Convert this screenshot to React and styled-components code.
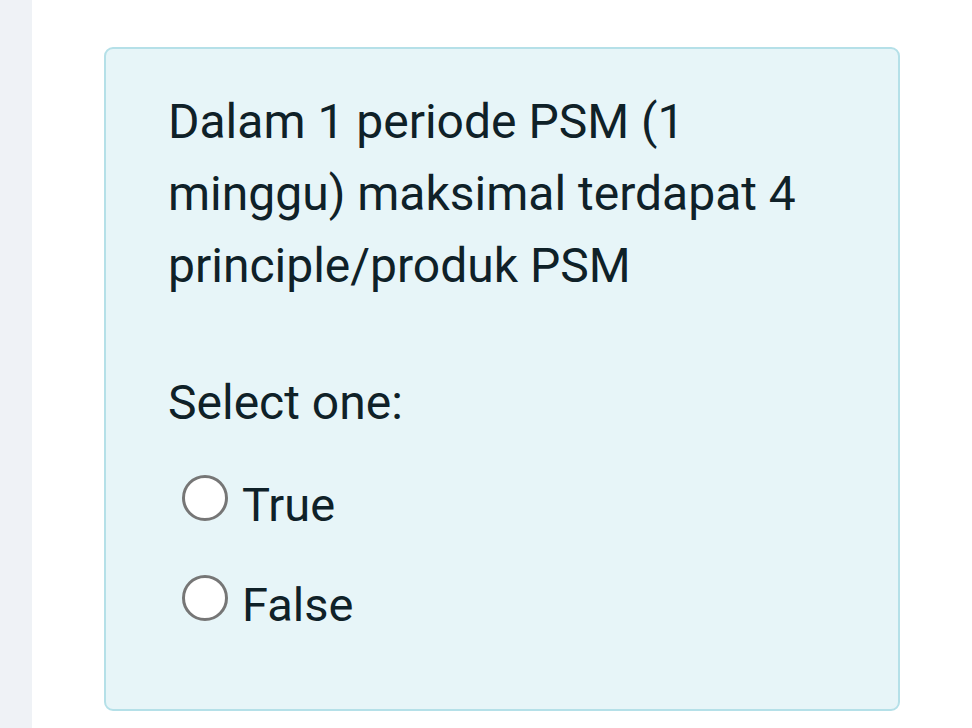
import React from "react";
import styled, { createGlobalStyle } from "styled-components";

const Global = createGlobalStyle`
  html, body { margin: 0; padding: 0; background: #ffffff; }
  body { font-family: Roboto, "Noto Sans", "Liberation Sans", sans-serif; }
  * { box-sizing: border-box; }
`;

const Page = styled.div`
  display: flex;
  min-height: 728px;
  background: #ffffff;
`;

const Sidebar = styled.aside`
  width: 32px;
  flex: 0 0 32px;
  background: #eff2f6;
`;

const Main = styled.main`
  flex: 1;
  padding: 47px 0 0 72px;
`;

const Card = styled.section`
  width: 796px;
  background: #e7f5f8;
  border: 2px solid #b5e0e8;
  border-radius: 9px;
  padding: 37px 60px 68px 62px;
  color: #0f2128;
`;

const Question = styled.p`
  margin: 0;
  font-size: 48px;
  line-height: 72px;
`;

const Prompt = styled.p`
  margin: 65px 0 0;
  font-size: 48px;
  line-height: 72px;
`;

const Options = styled.div`
  display: flex;
  flex-direction: column;
  gap: 28px;
  margin-top: 30px;
`;

const Option = styled.label`
  display: flex;
  align-items: center;
  height: 72px;
  font-size: 47px;
  line-height: 72px;
  cursor: pointer;
`;

const Radio = styled.span`
  width: 46px;
  height: 46px;
  flex: 0 0 46px;
  border-radius: 50%;
  border: 3px solid #767676;
  background: #ffffff;
  margin: 0 14px 15px 14px;
`;

export default function App() {
  return (
    <>
      <Global />
      <Page>
        <Sidebar />
        <Main>
          <Card>
            <Question>
              Dalam 1 periode PSM (1 minggu) maksimal terdapat 4 principle/produk PSM
            </Question>
            <Prompt>Select one:</Prompt>
            <Options>
              <Option>
                <Radio />
                True
              </Option>
              <Option>
                <Radio />
                False
              </Option>
            </Options>
          </Card>
        </Main>
      </Page>
    </>
  );
}
